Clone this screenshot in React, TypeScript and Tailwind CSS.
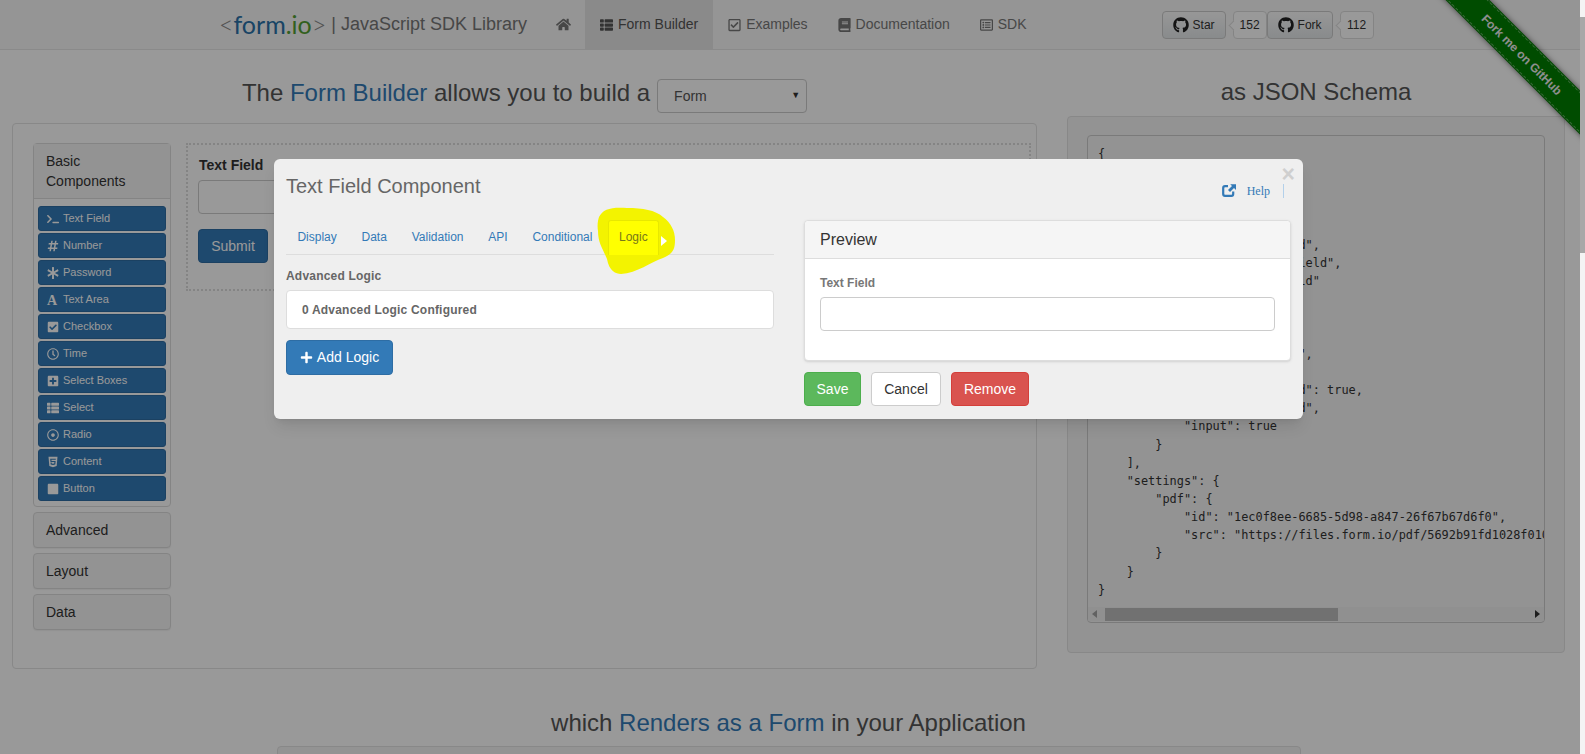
import React from 'react';
import {
  FaAsterisk,
  FaBook,
  FaCheckSquare,
  FaGithub,
  FaHashtag,
  FaHome,
  FaHtml5,
  FaPlus,
  FaPlusSquare,
  FaRegCheckSquare,
  FaRegClock,
  FaRegDotCircle,
  FaRegListAlt,
  FaStop,
  FaTerminal,
  FaThList,
} from 'react-icons/fa';

// glyphicon-font is a serif capital, the letter itself does the job
function SerifA({ className = '' }: { className?: string }) {
  return <span className={`font-['Liberation_Serif',serif] text-[14px] font-bold leading-none ${className}`}>A</span>;
}

const components: { label: string; icon: React.ElementType }[] = [
  { label: 'Text Field', icon: FaTerminal },
  { label: 'Number', icon: FaHashtag },
  { label: 'Password', icon: FaAsterisk },
  { label: 'Text Area', icon: SerifA },
  { label: 'Checkbox', icon: FaCheckSquare },
  { label: 'Time', icon: FaRegClock },
  { label: 'Select Boxes', icon: FaPlusSquare },
  { label: 'Select', icon: FaThList },
  { label: 'Radio', icon: FaRegDotCircle },
  { label: 'Content', icon: FaHtml5 },
  { label: 'Button', icon: FaStop },
];

const schema = `{
    "display": "form",
    "components": [
        {
            "input": true,
            "key": "textField",
            "label": "Text Field",
            "type": "textfield"
            "unique": 0,
            "tags": [],
            "mask": "",
            "placeholder": "",
            "validate": {
                    "required": true,
            "key": "textField",
            "input": true
        }
    ],
    "settings": {
        "pdf": {
            "id": "1ec0f8ee-6685-5d98-a847-26f67b67d6f0",
            "src": "https://files.form.io/pdf/5692b91fd1028f01000407e3/file/1ec0f8ee-6685-5d98-a847-26f67b67d6f0"
        }
    }
}`;

const tabs = ['Display', 'Data', 'Validation', 'API', 'Conditional'];

function NavItem({ icon: Icon, label, active = false }: { icon: React.ElementType; label: string; active?: boolean }) {
  return (
    <div className={`flex h-[49px] items-center gap-[5px] px-[15px] text-[14px] ${active ? 'bg-[#e7e7e7] text-[#555]' : 'text-[#777]'}`}>
      <Icon className="h-[14px] w-[13px]" />
      <span>{label}</span>
    </div>
  );
}

function GithubButton({ label, count }: { label: string; count: string }) {
  return (
    <div className="flex items-center">
      <div className="flex h-[28px] items-center gap-[4px] rounded-[4px] border border-[#ccc] bg-gradient-to-b from-[#fcfcfc] to-[#e4e8ea] px-[10px] text-[12px] text-[#333]">
        <FaGithub className="h-[16px] w-[16px] text-[#222]" />
        <span>{label}</span>
      </div>
      <div className="w-[7px]" />
      <div className="relative flex h-[28px] w-[34px] items-center justify-center rounded-[4px] border border-[#ddd] bg-white text-[12px] text-[#333]">
        <span className="absolute left-[-4px] top-[10px] h-[7px] w-[7px] rotate-45 border-b border-l border-[#ddd] bg-white" />
        {count}
      </div>
    </div>
  );
}

function App() {
  return (
    <div className="relative h-[754px] w-[1585px] overflow-hidden bg-white font-['Liberation_Sans',Arial,sans-serif] text-[14px] text-[#333]">
      {/* page under the modal */}
      <nav className="flex h-[50px] w-[1580px] items-start border-b border-[#e7e7e7] bg-[#f8f8f8] pl-[219px]">
        <div className="flex h-[49px] w-[322px] items-center">
          <span className="font-['Lato',sans-serif] text-[25px] font-light leading-none text-[#888]">
            &lt;<span className="font-normal text-[#2a72a8]">form</span><span className="font-normal text-[#54a032]">.io</span>&gt;
          </span>
          <span className="ml-[5px] whitespace-nowrap text-[18px] text-[#777]">| JavaScript SDK Library</span>
        </div>
        <div className="flex h-[49px] items-center pl-[15px] pr-[14px] text-[#777]">
          <FaHome className="h-[15px] w-[15px]" />
        </div>
        <NavItem icon={FaThList} label="Form Builder" active />
        <NavItem icon={FaRegCheckSquare} label="Examples" />
        <NavItem icon={FaBook} label="Documentation" />
        <NavItem icon={FaRegListAlt} label="SDK" />
        <div className="ml-[120px] flex h-[49px] items-center">
          <GithubButton label="Star" count="152" />
          <GithubButton label="Fork" count="112" />
        </div>
      </nav>

      <div className="flex w-[1580px] pl-[12px]">
        <div className="w-[1025px]">
          <div className="flex h-[73px] items-start justify-center pt-[29px]">
            <h2 className="-mt-[3px] whitespace-nowrap text-[24px] leading-[34px] text-[#555]">
              The <span className="text-[#337ab7]">Form Builder</span> allows you to build a
            </h2>
            <div className="ml-[7px] flex h-[34px] w-[150px] items-center justify-between rounded-[4px] border border-[#ccc] bg-white pl-[16px] pr-[6px] text-[14px] text-[#555]">
              Form
              <span className="text-[9px] text-[#333]">▼</span>
            </div>
          </div>
          <div className="flex h-[546px] gap-[15px] rounded-[4px] border border-[#e3e3e3] bg-white pl-[20px] pr-[5px] pt-[19px]">
            <aside className="flex w-[138px] shrink-0 flex-col gap-[5px]">
              <div className="rounded-[4px] border border-[#ddd] pb-[5px]">
                <div className="h-[55px] border-b border-[#ddd] bg-[#f5f5f5] px-[12px] pt-[7px] text-[14px] leading-[20px]">
                  Basic<br />Components
                </div>
                <div className="flex flex-col gap-[2px] px-[4px] pt-[7px]">
                  {components.map(({ label, icon: Icon }) => (
                    <div key={label} className="flex h-[25px] items-center rounded-[3px] border border-[#2e6da4] bg-[#337ab7] pl-[8px] text-[11px] text-white">
                      <span className="flex w-[16px] shrink-0 items-center"><Icon className="h-[12px] w-[12px]" /></span>
                      {label}
                    </div>
                  ))}
                </div>
              </div>
              {['Advanced', 'Layout', 'Data'].map((name) => (
                <div key={name} className="flex h-[36px] items-center rounded-[4px] border border-[#ddd] bg-[#f5f5f5] pl-[12px] text-[14px] shadow-[0_1px_1px_rgba(0,0,0,0.05)]">
                  {name}
                </div>
              ))}
            </aside>
            <div className="h-[148px] flex-1 border-2 border-dotted border-[#ddd] pl-[10px] pr-[10px] pt-[10px]">
              <div className="pl-[1px] text-[14px] font-bold leading-[20px]">Text Field</div>
              <div className="mt-[5px] h-[34px] rounded-[4px] border border-[#ccc] bg-white" />
              <button className="mt-[15px] h-[34px] w-[70px] rounded-[4px] border border-[#2e6da4] bg-[#337ab7] text-[14px] text-white">Submit</button>
            </div>
          </div>
        </div>
        <div className="ml-[30px] w-[498px]">
          <h2 className="flex h-[66px] items-start justify-center pt-[25px] text-[24px] leading-[34px] text-[#555]">as JSON Schema</h2>
          <div className="h-[537px] rounded-[4px] border border-[#e3e3e3] bg-[#f5f5f5] px-[19px] pt-[18px]">
            <div className="flex h-[488px] flex-col overflow-hidden rounded-[4px] border border-[#ccc] bg-[#f5f5f5]">
              <pre className="overflow-hidden whitespace-pre pl-[10px] pt-[9px] font-['DejaVu_Sans_Mono',monospace] text-[11.9px] leading-[18.15px] text-[#333]">{schema}</pre>
              <div className="mt-auto mb-[1px] flex h-[14px] items-center bg-[#f1f1f1]">
                <span className="ml-[4px] h-0 w-0 border-y-[4px] border-r-[5px] border-y-transparent border-r-[#a3a3a3]" />
                <span className="ml-[8px] h-[13px] w-[233px] bg-[#bcbcbc]" />
                <span className="ml-auto mr-[4px] h-0 w-0 border-y-[4px] border-l-[5px] border-y-transparent border-l-[#333]" />
              </div>
            </div>
          </div>
        </div>
      </div>

      <div className="flex w-[1577px] flex-col items-center pt-[37px]">
        <h2 className="whitespace-nowrap text-[24px] leading-[34px] text-[#555]">
          which <span className="text-[#337ab7]">Renders as a Form</span> in your Application
        </h2>
        <div className="mt-[6px] h-[20px] w-[1024px] rounded-t-[4px] border border-[#e3e3e3] bg-[#f5f5f5]" />
      </div>

      {/* github ribbon */}
      <div className="absolute left-[1430px] top-0 h-[150px] w-[150px] overflow-hidden">
        <div className="absolute left-[-18px] top-[40px] flex h-[29px] w-[220px] rotate-45 items-center justify-center border-y border-dashed border-[#5fb35f] bg-[#007f00] text-[12px] font-bold text-[#eee] shadow-[0_0_6px_#333] outline outline-1 outline-[#007f00]">
          Fork me on GitHub
        </div>
      </div>

      {/* backdrop */}
      <div className="absolute left-0 top-0 h-[754px] w-[1580px] bg-black/40" />

      {/* page scrollbar */}
      <div className="absolute right-0 top-0 h-[754px] w-[5px] bg-[#f4f4f4] pt-[17px]">
        <div className="h-[236px] bg-[#a8a8a8]" />
      </div>

      {/* modal */}
      <div className="absolute left-[274px] top-[159px] h-[260px] w-[1029px] rounded-[6px] bg-[#efefef] shadow-lg">
        <div className="relative flex h-[61px] items-start justify-between pl-[12px] pt-[13px]">
          <h4 className="text-[20px] leading-[28px] text-[#666]">Text Field Component</h4>
          <div className="mr-[19px] mt-[11px] flex items-center text-[#337ab7]">
            <svg className="h-[13px] w-[14px]" viewBox="0 0 14 13" fill="none">
              <path d="M6 2.2 H3 Q1.2 2.2 1.2 4 V10 Q1.2 11.8 3 11.8 H9.5 Q11.2 11.8 11.2 10 V7.5" stroke="currentColor" strokeWidth="2.2" />
              <path d="M8.2 0.2 H14 V6 L12 4 L8 8 L6 6 L10 2 Z" fill="currentColor" />
            </svg>
            <span className="ml-[11px] mt-[1px] font-['Liberation_Serif',serif] text-[12px] leading-[14px]">Help</span>
            <span className="ml-[13px] h-[14px] w-px bg-[#b3d0ea]" />
          </div>
          <span className="absolute right-[8px] top-[4px] text-[23px] font-bold leading-[23px] text-[#cfcfcf]">×</span>
        </div>
        <div className="flex pl-[12px]">
          <div className="w-[488px]">
            <div className="flex h-[35px] items-stretch border-b border-[#ddd] text-[12px] text-[#337ab7]">
              {tabs.map((tab) => (
                <span key={tab} className="flex items-center px-[12.4px] first:pl-[11.4px]">{tab}</span>
              ))}
              <div className="relative ml-[3px] flex w-[51px] items-center justify-center">
                <svg className="absolute left-[-11px] top-[-13px] h-[68px] w-[79px]" viewBox="0 0 79 68">
                  <path d="M2 10 C6 2 14 0 30 1 C46 1 58 3 66 10 C74 16 78 24 78 33 C78 42 76 47 66 51 C54 55 40 66 24 67 C19 67 12 64 10 52 C6 42 1 36 1 24 C0 18 1 13 2 10 Z" fill="#f3f300" />
                </svg>
                <span className="absolute inset-x-0 bottom-[-1px] top-0 rounded-t-[3px] border border-b-0 border-[#e8e800] bg-[#ffff00]" />
                <span className="relative text-[#77771a]">Logic</span>
                <svg className="absolute left-[53px] top-[16px] h-[10px] w-[6px]" viewBox="0 0 6 10">
                  <path d="M0 0 L6 5 L0 10 Z" fill="#fff" />
                </svg>
              </div>
            </div>
            <div className="relative mt-[13px] text-[12px] font-bold leading-[17px] tracking-[0.2px] text-[#666]">Advanced Logic</div>
            <div className="relative mt-[5px] flex h-[39px] items-center rounded-[4px] border border-[#ddd] bg-white pl-[15px] text-[12px] font-bold tracking-[0.2px] text-[#666]">
              0 Advanced Logic Configured
            </div>
            <button className="mt-[11px] flex h-[35px] w-[107px] items-center justify-center gap-[4px] rounded-[4px] border border-[#2e6da4] bg-[#337ab7] text-[14px] text-white">
              <FaPlus className="h-[13px] w-[13px]" />
              Add Logic
            </button>
          </div>
          <div className="ml-[30px] w-[487px]">
            <div className="h-[141px] rounded-[4px] border border-[#ddd] bg-white shadow-sm">
              <div className="flex h-[38px] items-center rounded-t-[4px] border-b border-[#ddd] bg-[#f5f5f5] pl-[15px] text-[16px] text-[#333]">Preview</div>
              <div className="px-[15px] pt-[16px]">
                <div className="text-[12px] font-bold leading-[17px] text-[#777]">Text Field</div>
                <div className="mt-[5px] h-[34px] rounded-[4px] border border-[#ccc] bg-white" />
              </div>
            </div>
            <div className="mt-[11px] flex gap-[10px]">
              <button className="h-[34px] w-[57px] rounded-[4px] border border-[#4cae4c] bg-[#5cb85c] text-[14px] text-white">Save</button>
              <button className="h-[34px] w-[70px] rounded-[4px] border border-[#ccc] bg-white text-[14px] text-[#333]">Cancel</button>
              <button className="h-[34px] w-[78px] rounded-[4px] border border-[#d43f3a] bg-[#d9534f] text-[14px] text-white">Remove</button>
            </div>
          </div>
        </div>
      </div>
    </div>
  );
}

export default App;
